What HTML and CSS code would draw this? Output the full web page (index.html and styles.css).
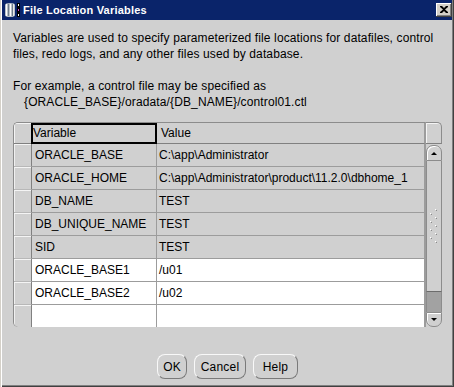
FILE: index.html
```html
<!DOCTYPE html>
<html>
<head>
<meta charset="utf-8">
<title>File Location Variables</title>
<link rel="stylesheet" href="styles.css">
</head>
<body>
<div class="window">
  <div class="titlebar">
    <svg class="app-icon" width="16" height="14" viewBox="0 0 16 14">
      <path d="M0 2 Q0 0 5 0 Q10 0 10 2 L10 12 Q10 14 5 14 Q0 14 0 12 Z" fill="#b8c0c8"/>
      <rect x="1" y="1" width="1" height="12" fill="#ffffff"/>
      <rect x="3" y="1" width="1" height="12" fill="#6e7c8a"/>
      <rect x="5" y="1" width="1" height="12" fill="#ffffff"/>
      <rect x="7" y="1" width="1" height="12" fill="#6e7c8a"/>
      <rect x="8" y="1" width="1" height="12" fill="#e8e8e8"/>
      <rect x="12" y="0" width="3" height="14" fill="#000000"/>
      <rect x="13" y="1" width="1" height="2" fill="#ffffff"/>
      <rect x="13" y="6" width="1" height="2" fill="#d040d0"/>
      <rect x="13" y="11" width="1" height="2" fill="#ffffff"/>
    </svg>
    <span class="title">File Location Variables</span>
    <button class="close" type="button" aria-label="Close">
      <svg width="8" height="7" viewBox="0 0 8 7"><path d="M0 0h2l2 2 2-2h2v1L5 3.5 8 6v1H6L4 5 2 7H0V6l3-2.5L0 1z" fill="#000"/></svg>
    </button>
  </div>
  <div class="content">
    <p class="desc">Variables are used to specify parameterized file locations for datafiles, control<br>files, redo logs, and any other files used by database.</p>
    <p class="desc example">For example, a control file may be specified as<br><span class="indent">{ORACLE_BASE}/oradata/{DB_NAME}/control01.ctl</span></p>
    <div class="grid-wrap">
      <div class="grid">
        <div class="row head">
          <div class="cell rh"></div>
          <div class="cell var focus">Variable</div>
          <div class="cell val">Value</div>
        </div>
        <div class="row">
          <div class="cell rh"></div>
          <div class="cell var">ORACLE_BASE</div>
          <div class="cell val">C:\app\Administrator</div>
        </div>
        <div class="row">
          <div class="cell rh"></div>
          <div class="cell var">ORACLE_HOME</div>
          <div class="cell val">C:\app\Administrator\product\11.2.0\dbhome_1</div>
        </div>
        <div class="row">
          <div class="cell rh"></div>
          <div class="cell var">DB_NAME</div>
          <div class="cell val">TEST</div>
        </div>
        <div class="row">
          <div class="cell rh"></div>
          <div class="cell var">DB_UNIQUE_NAME</div>
          <div class="cell val">TEST</div>
        </div>
        <div class="row">
          <div class="cell rh"></div>
          <div class="cell var">SID</div>
          <div class="cell val">TEST</div>
        </div>
        <div class="row editable">
          <div class="cell rh"></div>
          <div class="cell var">ORACLE_BASE1</div>
          <div class="cell val">/u01</div>
        </div>
        <div class="row editable">
          <div class="cell rh"></div>
          <div class="cell var">ORACLE_BASE2</div>
          <div class="cell val">/u02</div>
        </div>
        <div class="row editable">
          <div class="cell rh"></div>
          <div class="cell var"></div>
          <div class="cell val"></div>
        </div>
      </div>
      <div class="vscroll">
        <div class="corner"></div>
        <div class="arrow up"></div>
        <div class="thumb">
          <svg width="8" height="35" viewBox="0 0 8 35">
            <g fill="#ffffff">
              <rect x="5" y="0" width="1" height="1"/><rect x="0" y="4" width="1" height="1"/>
              <rect x="5" y="8" width="1" height="1"/><rect x="0" y="12" width="1" height="1"/>
              <rect x="5" y="16" width="1" height="1"/><rect x="0" y="20" width="1" height="1"/>
              <rect x="5" y="24" width="1" height="1"/><rect x="0" y="28" width="1" height="1"/>
              <rect x="5" y="32" width="1" height="1"/>
            </g>
            <g fill="#8a8a8a">
              <rect x="6" y="1" width="1" height="1"/><rect x="1" y="5" width="1" height="1"/>
              <rect x="6" y="9" width="1" height="1"/><rect x="1" y="13" width="1" height="1"/>
              <rect x="6" y="17" width="1" height="1"/><rect x="1" y="21" width="1" height="1"/>
              <rect x="6" y="25" width="1" height="1"/><rect x="1" y="29" width="1" height="1"/>
              <rect x="6" y="33" width="1" height="1"/>
            </g>
          </svg>
        </div>
        <div class="track"></div>
        <div class="arrow down"></div>
      </div>
    </div>
    <div class="buttons">
      <button class="btn btn-ok" type="button">OK</button>
      <button class="btn btn-cancel" type="button">Cancel</button>
      <button class="btn btn-help" type="button">Help</button>
    </div>
  </div>
</div>
</body>
</html>
```

FILE: styles.css
```css
html, body {
  margin: 0;
  padding: 0;
  background: #d0d0d0;
}

body {
  font-family: "Liberation Sans", Arial, sans-serif;
  color: #000;
}

.window {
  width: 454px;
  height: 387px;
  box-sizing: border-box;
  padding: 0 2px 2px 2px;
  background: #d0d0d0;
  box-shadow: inset 1px 0 #d4d0c8, inset 2px 0 #ffffff,
              inset -1px -1px #404040, inset -2px -2px #808080;
  overflow: hidden;
}

/* ---------- title bar ---------- */
.titlebar {
  height: 20px;
  background: #0a246a;
  display: flex;
  align-items: center;
  padding: 0 0 0 3px;
}

.app-icon {
  flex: none;
}

.title {
  margin-left: 2px;
  color: #fff;
  font: bold 11px "Liberation Sans", Arial, sans-serif;
  letter-spacing: 0.2px;
}

.close {
  margin-left: auto;
  width: 16px;
  height: 14px;
  padding: 0;
  border: 0;
  background: #d4d0c8;
  box-shadow: inset -1px -1px #404040, inset 1px 1px #ffffff,
              inset -2px -2px #808080, inset 2px 2px #d4d0c8;
  display: flex;
  align-items: center;
  justify-content: center;
}

.close svg {
  display: block;
  margin: 0 1px 1px 0;
}

/* ---------- content ---------- */
.content {
  padding: 10px 10px 0 11px;
}

.desc {
  margin: 0;
  font-size: 12px;
  line-height: 16px;
  letter-spacing: 0.12px;
  white-space: nowrap;
}

.example {
  margin-top: 16px;
}

.indent {
  padding-left: 11px;
}

/* ---------- table ---------- */
.grid-wrap {
  margin-top: 12px;
  display: flex;
  width: 429px;
  height: 205px;
}

.grid {
  width: 412px;
  height: 205px;
  box-sizing: border-box;
  border-left: 1px solid #8c8c8c;
  border-top: 1px solid #8c8c8c;
  border-radius: 5px 0 0 5px;
  overflow: hidden;
  flex: none;
}

.row {
  display: grid;
  grid-template-columns: 18px 125px 268px;
  height: 23px;
}

.row.head {
  height: 21px;
}

.cell {
  box-sizing: border-box;
  border-right: 1px solid #9c9c9c;
  border-bottom: 1px solid #9c9c9c;
  padding-left: 3px;
  font-size: 12px;
  line-height: 22px;
  white-space: nowrap;
  overflow: hidden;
}

.head .cell {
  line-height: 20px;
  border-bottom-color: #808080;
}

.rh {
  padding: 0;
  border-right-color: #808080;
  border-bottom-color: #b8b8b8;
  box-shadow: inset 0 1px #f4f4f4, inset 1px 0 #f0f0f0;
}

.head .rh {
  box-shadow: inset 1px 1px #f4f4f4;
}

.var.focus {
  padding-left: 2px;
  outline: 2px solid #000;
  outline-offset: -2px;
  margin-left: -1px;
}

.val {
  padding-left: 2px;
}

.head .val {
  padding-left: 4px;
}

.editable .var,
.editable .val {
  background: #ffffff;
}

/* ---------- vertical scrollbar ---------- */
.vscroll {
  width: 17px;
  height: 205px;
  display: flex;
  flex-direction: column;
  flex: none;
  box-sizing: border-box;
  border-left: 1px solid #9c9c9c;
}

.corner {
  height: 22px;
  box-sizing: border-box;
  border-top: 1px solid #8c8c8c;
  border-right: 1px solid #8c8c8c;
  border-bottom: 1px solid #808080;
  border-radius: 0 5px 0 0;
  box-shadow: inset 1px 1px #f4f4f4;
}

.arrow {
  height: 16px;
  box-sizing: border-box;
  border: 1px solid #8c8c8c;
  display: flex;
  align-items: center;
  justify-content: center;
}

.arrow.up {
  border-radius: 7px 7px 0 0;
  box-shadow: inset 1px 1px #ffffff;
  margin-top: 1px;
}

.arrow.up::after {
  content: "";
  border-left: 3px solid transparent;
  border-right: 3px solid transparent;
  border-bottom: 3px solid #000;
  margin-top: 1px;
}

.arrow.down {
  height: 15px;
  border-radius: 0 0 7px 7px;
  box-shadow: inset 1px 1px #ffffff;
}

.arrow.down::after {
  content: "";
  border-left: 3px solid transparent;
  border-right: 3px solid transparent;
  border-top: 3px solid #000;
  margin-top: -1px;
}

.thumb {
  height: 132px;
  box-sizing: border-box;
  border-left: 1px solid #8c8c8c;
  border-right: 1px solid #8c8c8c;
  border-bottom: 1px solid #6c6c6c;
  display: flex;
  align-items: center;
  justify-content: center;
}

.thumb svg {
  display: block;
}

.track {
  height: 20px;
  background: #a2a2a2;
  box-sizing: border-box;
  border-left: 1px solid #8c8c8c;
  border-right: 1px solid #8c8c8c;
}

/* ---------- buttons ---------- */
.buttons {
  display: flex;
  justify-content: center;
  gap: 7px;
  margin-top: 27px;
}

.btn {
  height: 25px;
  padding: 0;
  box-sizing: border-box;
  background: #d0d0d0;
  border: 1px solid;
  border-color: #f8f8f8 #7a7a7a #7a7a7a #f8f8f8;
  border-radius: 8px;
  font: 12px "Liberation Sans", Arial, sans-serif;
  letter-spacing: 0.2px;
  color: #000;
}

.btn-ok { width: 30px; }
.btn-cancel { width: 52px; }
.btn-help { width: 45px; }
```
